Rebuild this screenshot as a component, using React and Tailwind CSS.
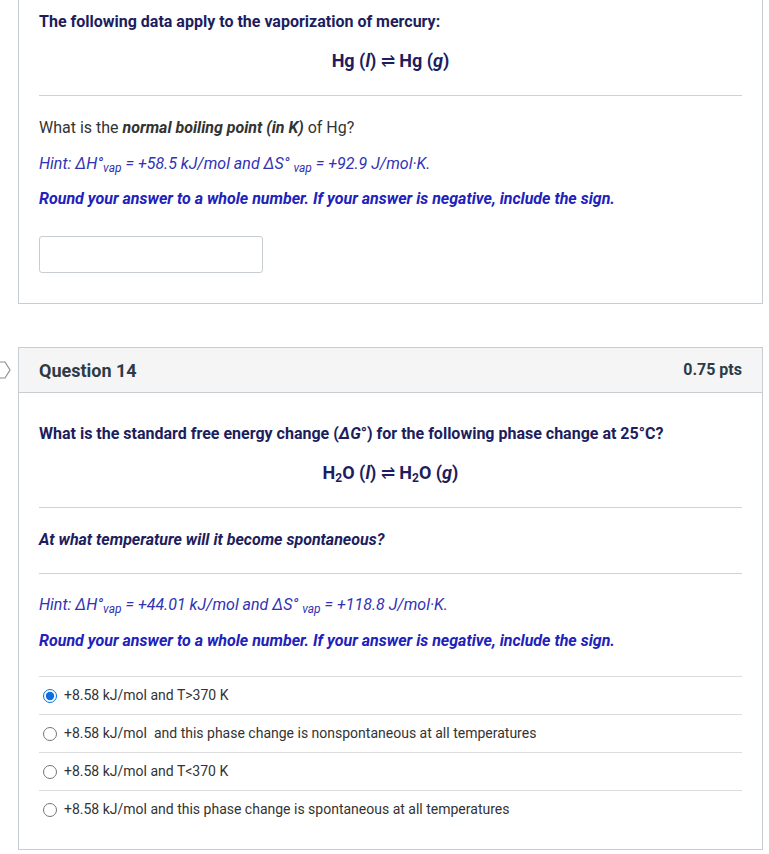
import { useState } from 'react'

const options = [
  '+8.58 kJ/mol and T>370 K',
  '+8.58 kJ/mol\u00a0 and this phase change is nonspontaneous at all temperatures',
  '+8.58 kJ/mol and T<370 K',
  '+8.58 kJ/mol and this phase change is spontaneous at all temperatures',
]

function Hint({ dh, ds }) {
  return (
    <p className="text-[16px] leading-[24px] italic text-[#3232b4]">
      Hint: ΔH°<sub className="text-[12px]">vap</sub> = {dh} kJ/mol and ΔS°{' '}
      <sub className="text-[12px]">vap</sub> = {ds} J/mol·K.
    </p>
  )
}

function RoundNote() {
  return (
    <p className="text-[16px] leading-[24px] font-bold italic text-[#2121bb]">
      Round your answer to a whole number. If your answer is negative, include the sign.
    </p>
  )
}

export default function App() {
  const [choice, setChoice] = useState(0)
  const [answer, setAnswer] = useState('')

  return (
    <div className="bg-white min-h-[854px] font-['Roboto',sans-serif] text-[#333]">
      {/* previous question (tail end) */}
      <div className="ml-[18px] mr-[6px] border-x border-b border-[#c7cdd1] px-5 pt-[10px] pb-[30px]">
        <p className="text-[16px] leading-[24px] font-bold text-[#201d5e]">
          The following data apply to the vaporization of mercury:
        </p>
        <p className="mt-[14px] text-center text-[18px] leading-[26px] font-bold text-[#201d5e]">
          Hg (<i>l</i>) <span className="text-[17px] font-normal">⇌</span> Hg (<i>g</i>)
        </p>
        <hr className="mt-[21px] border-t border-[#d2d2d2]" />
        <p className="mt-[20px] text-[16px] leading-[24px] text-[#333]">
          What is the <b><i>normal boiling point (in K)</i></b> of Hg?
        </p>
        <div className="mt-[12px]">
          <Hint dh="+58.5" ds="+92.9" />
        </div>
        <div className="mt-[11px]">
          <RoundNote />
        </div>
        <input
          value={answer}
          onChange={(e) => setAnswer(e.target.value)}
          className="mt-[25px] block w-[224px] h-[37px] border border-[#c7cdd1] rounded-[3px] px-2 text-[15px] outline-none"
        />
      </div>

      {/* Question 14 */}
      <div className="relative mt-[43px] ml-[18px] mr-[6px] border border-[#c7cdd1]">
        <svg className="absolute left-[-22px] top-[13px]" width="14" height="18" viewBox="0 0 14 18">
          <path d="M1 1 L8 1 L13 9 L8 17 L1 17" fill="none" stroke="#8a9096" strokeWidth="1.2" />
        </svg>
        <div className="flex items-center justify-between h-[45px] px-5 bg-[#f5f5f5] border-b border-[#c7cdd1]">
          <h2 className="text-[18px] font-bold text-[#2d3b45]">Question 14</h2>
          <span className="text-[16px] font-bold text-[#2d3b45]">0.75 pts</span>
        </div>
        <div className="px-5 pt-[29px] pb-[21px]">
          <p className="text-[16px] leading-[24px] font-bold text-[#201d5e]">
            What is the standard free energy change (<i>ΔG</i>°) for the following phase change at 25°C?
          </p>
          <p className="mt-[14px] text-center text-[18px] leading-[26px] font-bold text-[#201d5e]">
            H<sub className="text-[12px]">2</sub>O (<i>l</i>){' '}
            <span className="text-[17px] font-normal">⇌</span> H
            <sub className="text-[12px]">2</sub>O (<i>g</i>)
          </p>
          <hr className="mt-[21px] border-t border-[#d2d2d2]" />
          <p className="mt-[20px] text-[16px] leading-[24px] font-bold italic text-[#201d5e]">
            At what temperature will it become spontaneous?
          </p>
          <hr className="mt-[21px] border-t border-[#d2d2d2]" />
          <div className="mt-[19px]">
            <Hint dh="+44.01" ds="+118.8" />
          </div>
          <div className="mt-[12px]">
            <RoundNote />
          </div>
          <div className="mt-[23px]">
            {options.map((opt, i) => (
              <label
                key={i}
                className="flex items-center h-[38px] border-t border-[#dcdcdc] pl-[4px] cursor-pointer"
              >
                <input
                  type="radio"
                  name="q14"
                  checked={choice === i}
                  onChange={() => setChoice(i)}
                  className="w-[14px] h-[14px] m-0 accent-[#0b6fe0]"
                />
                <span className="ml-[7px] text-[14px] text-[#333] whitespace-pre">{opt}</span>
              </label>
            ))}
          </div>
        </div>
      </div>
    </div>
  )
}
